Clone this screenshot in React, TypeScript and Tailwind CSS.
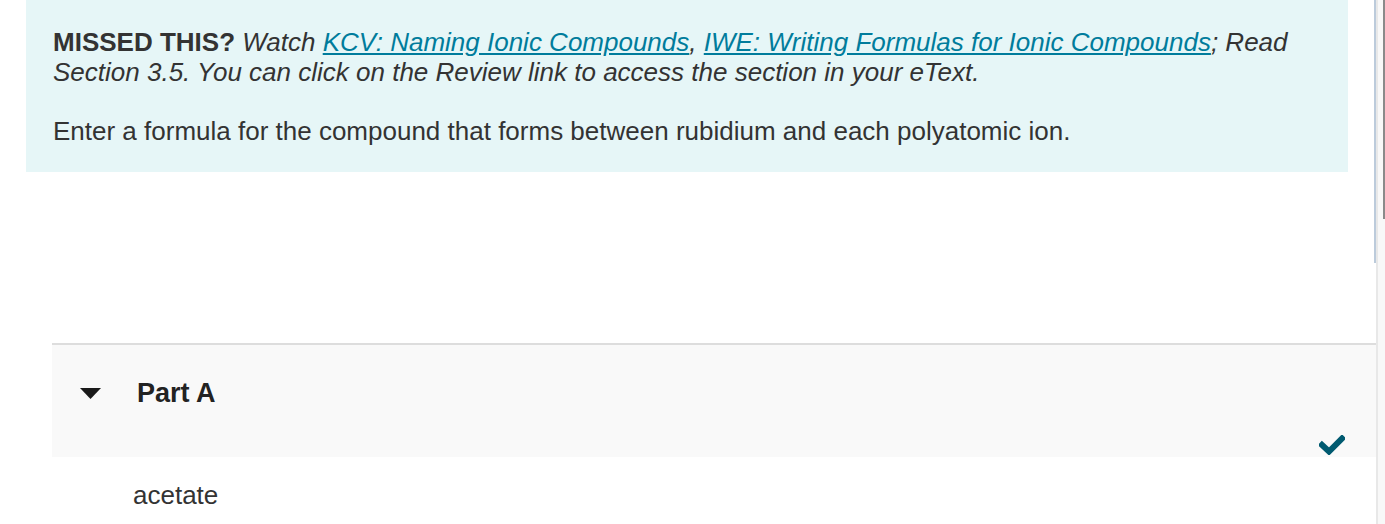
import React from 'react';

function Checkmark() {
  return (
    <svg width="26" height="20" viewBox="0 0 26 20" className="block">
      <polyline
        points="3,10 10,16.5 23,3.5"
        fill="none"
        stroke="#005a70"
        strokeWidth="6"
        strokeLinecap="square"
        strokeLinejoin="miter"
      />
    </svg>
  );
}

function Caret() {
  return (
    <svg width="21" height="11" viewBox="0 0 21 11" className="block">
      <polygon points="0,0 21,0 10.5,11" fill="#1a1a1a" />
    </svg>
  );
}

export default function App() {
  return (
    <div className="flex h-[524px] w-[1385px] overflow-hidden bg-white text-[#333] font-['Liberation_Sans',Arial,sans-serif]">
      <div className="relative flex-1 flex flex-col">
        <div className="ml-[26px] mr-[28px] bg-[#e6f6f7] px-[27px] pt-[27px] pb-[26px] text-[26px] leading-[30px]">
          <p>
            <strong className="font-bold">MISSED THIS?</strong>{' '}
            <em>
              Watch{' '}
              <a href="#" className="text-[#007c9c] underline underline-offset-2">
                KCV: Naming Ionic Compounds
              </a>
              ,{' '}
              <a href="#" className="text-[#007c9c] underline underline-offset-2">
                IWE: Writing Formulas for Ionic Compounds
              </a>
              ; Read Section 3.5. You can click on the Review link to access the section in your eText.
            </em>
          </p>
          <p className="mt-[29px]">
            Enter a formula for the compound that forms between rubidium and each polyatomic ion.
          </p>
        </div>

        <div className="mt-[171px] ml-[52px] border-t-2 border-[#dddddd] bg-[#f9f9f9] h-[114px] flex flex-col">
          <div className="flex items-center pl-[28px] pt-[33px]">
            <Caret />
            <h2 className="ml-[36px] text-[27px] font-bold leading-[30px] text-[#222]">Part A</h2>
          </div>
          <div className="mt-auto flex justify-end pr-[31px] pb-[2px]">
            <Checkmark />
          </div>
        </div>

        <div className="ml-[133px] mt-[23px] text-[26px] leading-[30px] text-[#333]">acetate</div>

        <div className="absolute right-0 top-0 h-[263px] w-[2px] bg-[#bccbdb]" />
      </div>

      <div className="w-[9px] flex border-l-2 border-[#e8e8e8] bg-[#f8f8f8]">
        <div className="flex-1" />
        <div className="w-[2px] h-[219px] bg-[#8a8a8a]" />
      </div>
    </div>
  );
}
